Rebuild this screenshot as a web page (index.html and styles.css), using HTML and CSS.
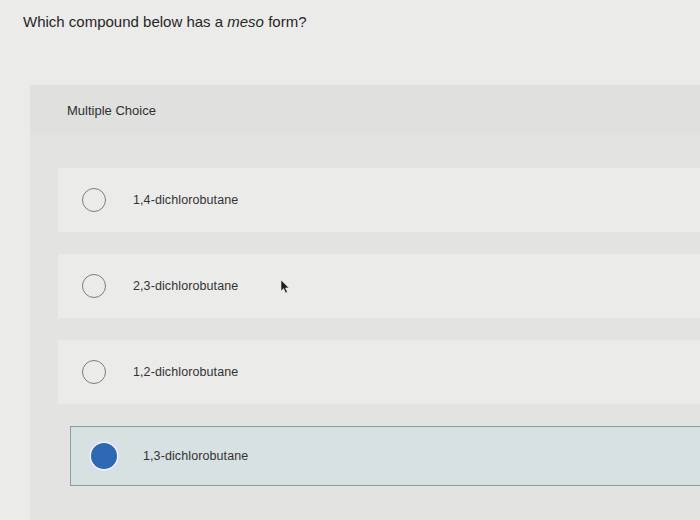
FILE: index.html
```html
<!DOCTYPE html>
<html>
<head>
<meta charset="utf-8">
<link rel="stylesheet" href="styles.css">
</head>
<body>
<div class="page">
  <h1 class="title">Which compound below has a <em>meso</em> form?</h1>
  <section class="panel">
    <div class="panel-header">Multiple Choice</div>
    <div class="options">
      <div class="option"><span class="radio"></span><span class="label">1,4-dichlorobutane</span></div>
      <div class="option"><span class="radio"></span><span class="label">2,3-dichlorobutane</span></div>
      <div class="option"><span class="radio"></span><span class="label">1,2-dichlorobutane</span></div>
      <div class="option selected"><span class="radio filled"></span><span class="label">1,3-dichlorobutane</span></div>
    </div>
  </section>
  <svg class="cursor" width="11" height="15" viewBox="0 0 11 15"><path d="M1 1 L1 12 L3.6 9.6 L5.6 14 L7.4 13.2 L5.5 8.9 L9 8.9 Z" fill="#1e1e1e" stroke="#e8e8e8" stroke-width="0.6"/></svg>
</div>
</body>
</html>
```
FILE: styles.css
```css
html, body {
  margin: 0;
  padding: 0;
}
body {
  background: #ebebea;
  font-family: "Liberation Sans", Arial, sans-serif;
  color: #2c2c2c;
}
.page {
  position: relative;
  width: 700px;
  height: 520px;
  overflow: hidden;
}
.title {
  margin: 0;
  padding: 13px 0 0 23px;
  height: 85px;
  box-sizing: border-box;
  font-size: 15px;
  font-weight: normal;
  line-height: 18px;
  color: #262626;
}
.title em {
  font-style: italic;
}
.panel {
  margin-left: 30px;
  background: #e3e3e2;
  height: 435px;
}
.panel-header {
  height: 50px;
  display: flex;
  align-items: center;
  padding-left: 37px;
  font-size: 13px;
  color: #2f2f2f;
  background: #e0e0df;
}
.options {
  padding-top: 33px;
  display: flex;
  flex-direction: column;
  gap: 22px;
}
.option {
  height: 64px;
  margin-left: 28px;
  background: #ebebea;
  display: flex;
  align-items: center;
  padding-left: 24px;
  gap: 27px;
  box-sizing: border-box;
}
.radio {
  width: 24px;
  height: 24px;
  box-sizing: border-box;
  border: 1.5px solid #7c7c7c;
  border-radius: 50%;
  flex: none;
}
.label {
  font-size: 12.5px;
  color: #333;
  letter-spacing: 0.1px;
}
.option.selected {
  margin-left: 40px;
  height: 60px;
  background: #d8e1e2;
  border: 1px solid #8e9da1;
  border-right: none;
  padding-left: 20px;
  gap: 26px;
}
.radio.filled {
  width: 26px;
  height: 26px;
  border: none;
  background: #2e67b4;
  box-shadow: 0 0 0 1.5px #eef3f6;
}
.cursor {
  position: absolute;
  left: 280px;
  top: 279px;
}
```
